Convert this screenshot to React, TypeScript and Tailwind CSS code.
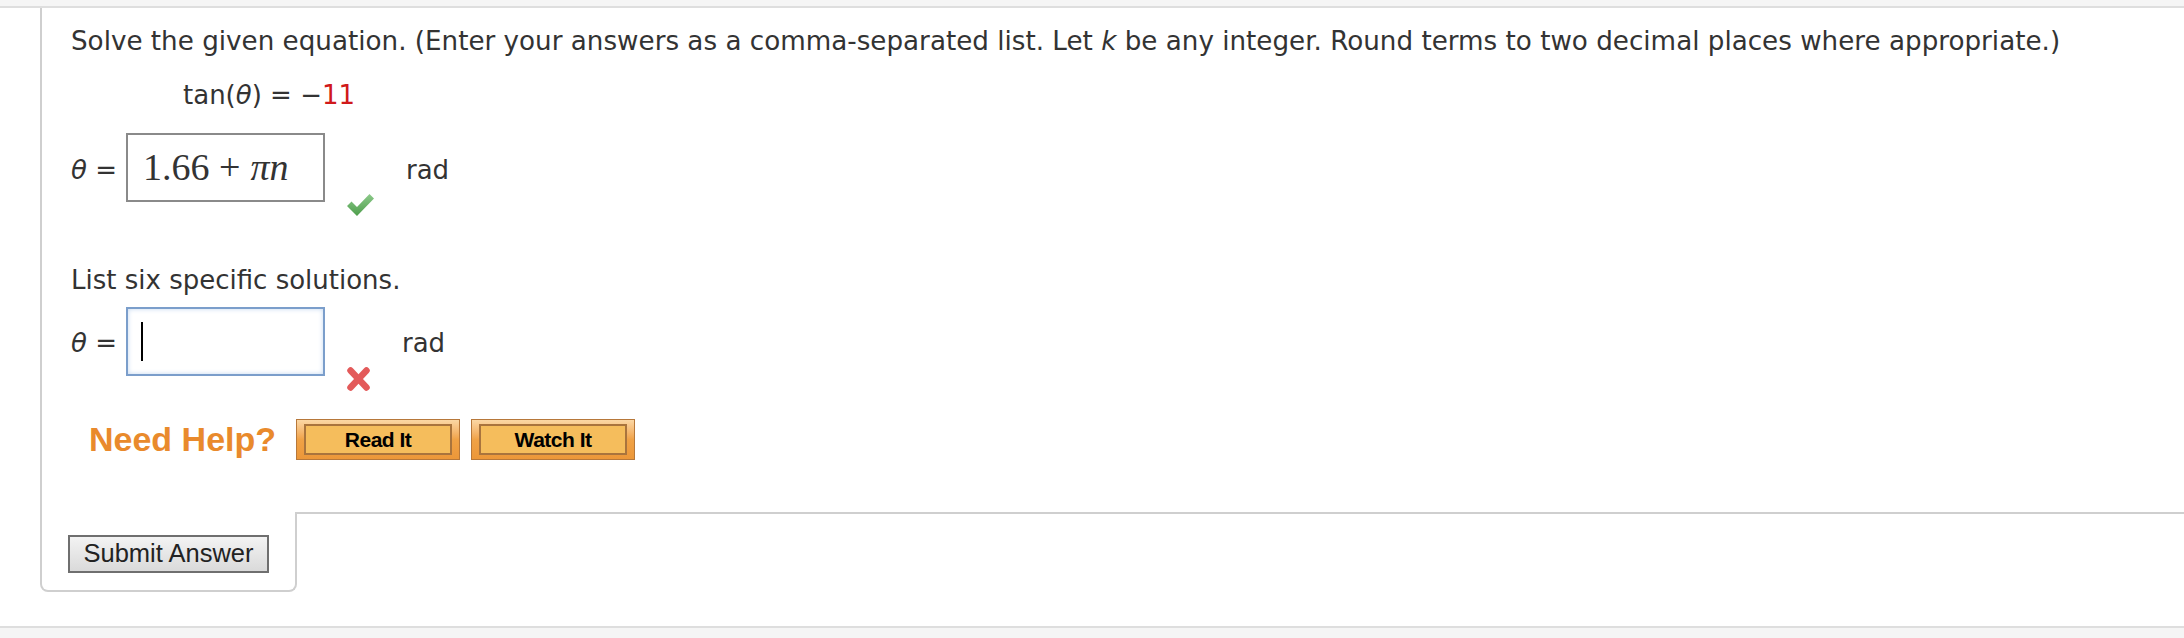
import React from "react";

function CheckIcon() {
  return (
    <svg width="29" height="24" viewBox="0 0 29 24">
      <defs>
        <linearGradient id="chk" x1="0" y1="0" x2="0" y2="1">
          <stop offset="0" stopColor="#8cc98a" />
          <stop offset="1" stopColor="#4e9e4c" />
        </linearGradient>
      </defs>
      <path d="M1 13 L5.5 8.5 L11 14 L23.5 1 L28 5.5 L11 23 Z" fill="url(#chk)" />
    </svg>
  );
}

function CrossIcon() {
  return (
    <svg width="25" height="26" viewBox="0 0 25 26">
      <g stroke="#e35a5a" strokeWidth="6.5" strokeLinecap="round">
        <line x1="4.5" y1="4.5" x2="20.5" y2="21.5" />
        <line x1="20.5" y1="4.5" x2="4.5" y2="21.5" />
      </g>
    </svg>
  );
}

function HelpButton({ label }: { label: string }) {
  return (
    <button
      type="button"
      className="h-[41px] w-[164px] border border-[#b7783a] bg-linear-to-b from-[#fbd7a4] via-[#f0a246] to-[#ec9739] px-[7px] py-[4px]"
    >
      <span className="flex h-full items-center justify-center border-2 border-[#a9743d] bg-[#f5bd5c] font-['Liberation_Sans',Arial,sans-serif] text-[21px] font-bold tracking-[-0.5px] text-black">
        {label}
      </span>
    </button>
  );
}

export default function App() {
  return (
    <div className="h-[638px] w-[2184px] overflow-hidden bg-white font-['DejaVu_Sans',Verdana,sans-serif] text-[#333]">
      <div className="h-[6px] bg-[#f5f5f5]" />
      <div className="h-[2px] bg-[#dedede]" />

      <div className="ml-[40px] h-[504px] border-l-2 border-[#cfcfcf] pl-[29px] pt-[15px]">
        <p className="text-[26.2px] leading-[36px]">
          Solve the given equation. (Enter your answers as a comma-separated list. Let <i>k</i> be any
          integer. Round terms to two decimal places where appropriate.)
        </p>

        <p className="ml-[112px] mt-[18px] text-[26px] leading-[36px]">
          tan(<i>θ</i>) = −<span className="text-[#d0191b]">11</span>
        </p>

        <div className="mt-[20px] flex items-start">
          <span className="mt-[19px] w-[55px] text-[26px] leading-[36px]">
            <i>θ</i> =
          </span>
          <div className="flex h-[69px] w-[199px] items-center border-2 border-[#8a8a8a] pl-[15px] font-['Liberation_Serif',serif] text-[38px] text-[#333]">
            1.66 + <i className="ml-[10px]">π</i>
            <i>n</i>
          </div>
          <span className="ml-[21px] mt-[60px]">
            <CheckIcon />
          </span>
          <span className="ml-[31px] mt-[19px] text-[26px] leading-[36px]">rad</span>
        </div>

        <p className="mt-[45px] text-[26px] leading-[36px]">List six specific solutions.</p>

        <div className="mt-[9px] flex items-start">
          <span className="mt-[18px] w-[55px] text-[26px] leading-[36px]">
            <i>θ</i> =
          </span>
          <div className="flex h-[69px] w-[199px] items-center border-2 border-[#7b9ecb] pl-[13px] shadow-[inset_0_0_5px_#c4d8f0]">
            <span className="h-[39px] w-[2px] bg-black" />
          </div>
          <span className="ml-[21px] mt-[59px]">
            <CrossIcon />
          </span>
          <span className="ml-[31px] mt-[18px] text-[26px] leading-[36px]">rad</span>
        </div>

        <div className="ml-[18px] mt-[22px] flex items-center">
          <span className="mr-[20px] font-['Liberation_Sans',Arial,sans-serif] text-[34px] font-bold text-[#e98a2c]">
            Need Help?
          </span>
          <div className="flex gap-[11px]">
            <HelpButton label="Read It" />
            <HelpButton label="Watch It" />
          </div>
        </div>
      </div>

      <div className="flex h-[80px]">
        <div className="ml-[40px] w-[257px] rounded-b-[8px] border-x-2 border-b-2 border-[#cfcfcf] pl-[26px] pt-[23px]">
          <button
            type="button"
            className="h-[38px] w-[201px] border-2 border-[#6f6f6f] bg-linear-to-b from-[#f3f3f3] to-[#dadada] font-['Liberation_Sans',Arial,sans-serif] text-[25.5px] leading-none text-[#222]"
          >
            Submit Answer
          </button>
        </div>
        <div className="flex-1 border-t-2 border-[#cfcfcf]" />
      </div>

      <div className="mt-[34px] h-[2px] bg-[#dedede]" />
      <div className="h-[10px] bg-[#f5f5f5]" />
    </div>
  );
}
